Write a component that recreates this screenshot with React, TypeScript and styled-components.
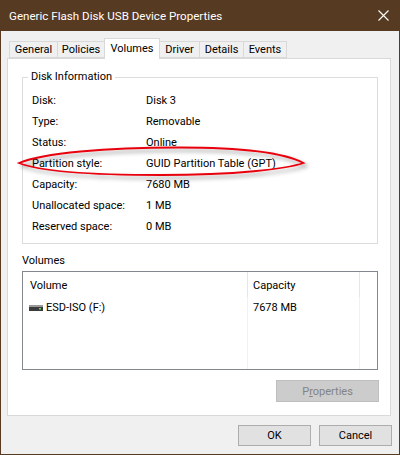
import React from 'react'
import styled, { createGlobalStyle } from 'styled-components'

const GlobalStyle = createGlobalStyle`
  html, body {
    margin: 0;
    padding: 0;
    background: #f0f0f0;
  }
  * {
    box-sizing: border-box;
  }
`

const Dialog = styled.div`
  position: relative;
  width: 400px;
  height: 455px;
  background: #f0f0f0;
  border: solid #573a22;
  border-width: 0 1px 1px 1px;
  font-family: Roboto, "Noto Sans", sans-serif;
  font-size: 11px;
  color: #000;
  overflow: hidden;
`

const TitleBar = styled.div`
  display: flex;
  align-items: center;
  justify-content: space-between;
  height: 31px;
  margin: 0 -1px;
  padding: 0 11px 0 9px;
  background: #573a22;
  color: #fff;
  font-size: 11.6px;
`

const Content = styled.div`
  padding: 9px 7px 0 6px;
`

const TabRow = styled.div`
  display: flex;
  align-items: flex-end;
  height: 18px;
  padding-left: 3px;
`

const Tab = styled.div<{ $active?: boolean; $width: number }>`
  display: flex;
  align-items: center;
  justify-content: center;
  position: relative;
  width: ${({ $width }) => $width}px;
  height: ${({ $active }) => ($active ? 21 : 17)}px;
  margin-bottom: ${({ $active }) => ($active ? -1 : 0)}px;
  padding-bottom: ${({ $active }) => ($active ? 1 : 0)}px;
  background: ${({ $active }) => ($active ? '#fff' : '#f0f0f0')};
  border: 1px solid #d9d9d9;
  border-bottom: ${({ $active }) => ($active ? 'none' : '1px solid #d9d9d9')};
  margin-left: -1px;
  z-index: ${({ $active }) => ($active ? 1 : 0)};
`

const Panel = styled.div`
  width: 384px;
  height: 358px;
  padding: 11px 12px 0 14px;
  background: #fff;
  border: 1px solid #d9d9d9;
`

const GroupBox = styled.fieldset`
  height: 174px;
  margin: 0;
  padding: 6px 0 0 9px;
  border: 1px solid #dcdcdc;
`

const GroupTitle = styled.legend`
  margin-left: -4px;
  padding: 0 3px;
  line-height: 14px;
`

const InfoRow = styled.div`
  display: grid;
  grid-template-columns: 114px 1fr;
  height: 21px;
  line-height: 21px;
  white-space: nowrap;
`

const VolumesLabel = styled.div`
  margin-top: 10px;
  height: 17px;
  line-height: 14px;
`

const ListBox = styled.div`
  height: 99px;
  border: 1px solid #828790;
  display: grid;
  grid-template-columns: 225px 112px 1fr;
`

const ListColumn = styled.div<{ $last?: boolean }>`
  border-right: ${({ $last }) => ($last ? 'none' : '1px solid #eef2f6')};
`

const ListHeaderCell = styled.div<{ $inset: number }>`
  height: 25px;
  padding: 5px 0 0 ${({ $inset }) => $inset}px;
  line-height: 17px;
  border-right: 1px solid #e5e5e5;
  margin-right: -1px;
`

const ListCell = styled.div<{ $inset: number }>`
  display: flex;
  align-items: center;
  gap: 3px;
  height: 21px;
  padding-left: ${({ $inset }) => $inset}px;
`

const PanelActions = styled.div`
  display: flex;
  justify-content: flex-end;
  margin: 10px -1px 0 0;
`

const Button = styled.button<{ $disabled?: boolean }>`
  width: ${({ $disabled }) => ($disabled ? 103 : 73)}px;
  height: ${({ $disabled }) => ($disabled ? 22 : 21)}px;
  padding: 0;
  border: 1px solid #adadad;
  color: ${({ $disabled }) => ($disabled ? '#838383' : '#000')};
  background: ${({ $disabled }) => ($disabled ? '#cccccc' : '#e1e1e1')};
  border-color: ${({ $disabled }) => ($disabled ? '#bfbfbf' : '#adadad')};
  font: inherit;
`

const Footer = styled.div`
  display: flex;
  justify-content: flex-end;
  gap: 8px;
  margin: 9px 0 0 0;
`

const Underlined = styled.span`
  text-decoration: underline;
`

const Annotation = styled.svg`
  position: absolute;
  left: 0;
  top: 0;
  pointer-events: none;
`

const infoRows = [
  ['Disk:', 'Disk 3'],
  ['Type:', 'Removable'],
  ['Status:', 'Online'],
  ['Partition style:', 'GUID Partition Table (GPT)'],
  ['Capacity:', '7680 MB'],
  ['Unallocated space:', '1 MB'],
  ['Reserved space:', '0 MB']
]

const tabs = [
  { label: 'General', width: 49 },
  { label: 'Policies', width: 48 },
  { label: 'Volumes', width: 56, active: true },
  { label: 'Driver', width: 41 },
  { label: 'Details', width: 45 },
  { label: 'Events', width: 44 }
]

const CloseIcon = () => (
  <svg width="11" height="11" viewBox="0 0 11 11">
    <path d="M0.5 0.5 L10.5 10.5 M10.5 0.5 L0.5 10.5" stroke="#fff" strokeWidth="1.1" fill="none" />
  </svg>
)

const DriveIcon = () => (
  <svg width="14" height="6" viewBox="0 0 14 6">
    <rect x="0" y="0" width="14" height="2" fill="#9a9a9a" />
    <rect x="0" y="2" width="14" height="4" fill="#3c3c3c" />
    <rect x="10" y="3" width="2" height="1.5" fill="#5fd35f" />
  </svg>
)

export default function App() {
  return (
    <>
      <GlobalStyle />
      <Dialog>
        <TitleBar>
          <span>Generic Flash Disk USB Device Properties</span>
          <CloseIcon />
        </TitleBar>
        <Content>
          <TabRow>
            {tabs.map(tab => (
              <Tab key={tab.label} $active={tab.active} $width={tab.width}>
                {tab.label}
              </Tab>
            ))}
          </TabRow>
          <Panel>
            <GroupBox>
              <GroupTitle>Disk Information</GroupTitle>
              {infoRows.map(([label, value]) => (
                <InfoRow key={label}>
                  <span>{label}</span>
                  <span>{value}</span>
                </InfoRow>
              ))}
            </GroupBox>
            <VolumesLabel>Volumes</VolumesLabel>
            <ListBox>
              <ListColumn>
                <ListHeaderCell $inset={7}>Volume</ListHeaderCell>
                <ListCell $inset={6}>
                  <DriveIcon />
                  ESD-ISO (F:)
                </ListCell>
              </ListColumn>
              <ListColumn>
                <ListHeaderCell $inset={5}>Capacity</ListHeaderCell>
                <ListCell $inset={5}>7678 MB</ListCell>
              </ListColumn>
              <ListColumn $last />
            </ListBox>
            <PanelActions>
              <Button $disabled>
                P<Underlined>r</Underlined>operties
              </Button>
            </PanelActions>
          </Panel>
          <Footer>
            <Button>OK</Button>
            <Button>Cancel</Button>
          </Footer>
        </Content>
        <Annotation width="400" height="455" viewBox="0 0 400 455">
          <defs>
            <filter id="shadow" x="-10%" y="-40%" width="120%" height="200%">
              <feDropShadow dx="3" dy="3" stdDeviation="2" floodColor="#000" floodOpacity="0.4" />
            </filter>
          </defs>
          <path
            d="M18 163 C 42 153, 105 147.5, 178 147.5 C 238 147.5, 282 152, 302.5 163 C 285 169, 235 175, 160 175 C 95 175, 40 172, 18 163 Z"
            fill="none"
            stroke="#e8000e"
            strokeWidth="1.8"
            filter="url(#shadow)"
          />
        </Annotation>
      </Dialog>
    </>
  )
}
